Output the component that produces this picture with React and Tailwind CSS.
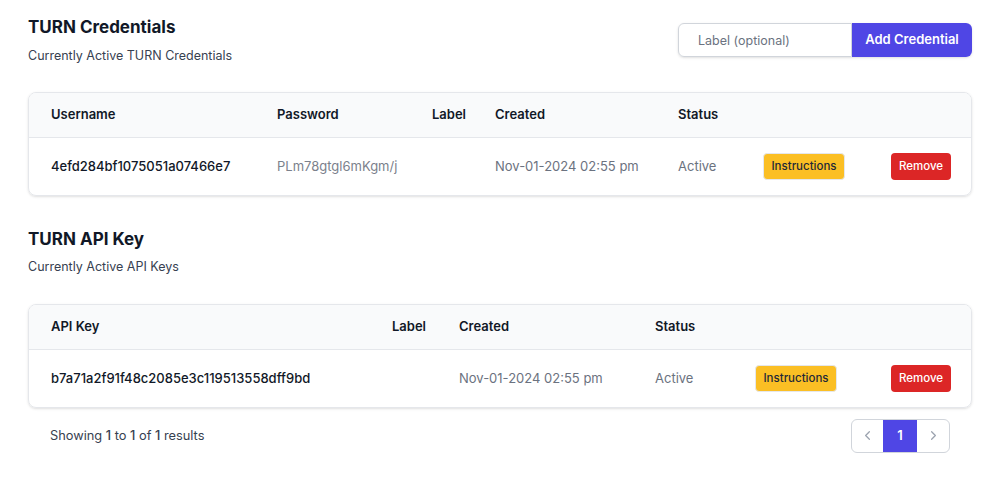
import { ChevronLeft, ChevronRight } from 'lucide-react'

const credCols = [
  { label: 'Username', w: 'w-[226px]' },
  { label: 'Password', w: 'w-[155px]' },
  { label: 'Label', w: 'w-[63px]' },
  { label: 'Created', w: 'w-[183px]' },
  { label: 'Status', w: 'w-[85px]' },
  { label: '', w: 'w-[128px]' },
  { label: '', w: '' },
]

const keyCols = [
  { label: 'API Key', w: 'w-[341px]' },
  { label: 'Label', w: 'w-[67px]' },
  { label: 'Created', w: 'w-[196px]' },
  { label: 'Status', w: 'w-[100px]' },
  { label: '', w: 'w-[136px]' },
  { label: '', w: '' },
]

function Actions() {
  return (
    <>
      <td className="pl-[22px]">
        <button className="h-[27px] w-[82px] rounded bg-[#fbbf24] border border-[#e5e7eb] text-[11.5px] font-medium text-[#1f2937]">
          Instructions
        </button>
      </td>
      <td className="pl-[22px]">
        <button className="h-[27px] w-[60px] rounded bg-[#dc2626] text-[11.5px] font-medium text-white">
          Remove
        </button>
      </td>
    </>
  )
}

function Table({ cols, children }) {
  return (
    <div className="border border-[#e5e7eb] rounded-lg shadow-sm overflow-hidden">
      <table className="w-full table-fixed border-collapse">
        <thead>
          <tr className="bg-[#f9fafb] border-b border-[#e5e7eb] h-[45px]">
            {cols.map((c, i) => (
              <th key={i} className={`${c.w} pl-[22px] text-left text-[13px] font-semibold text-[#111827]`}>
                {c.label}
              </th>
            ))}
          </tr>
        </thead>
        <tbody>
          <tr className="h-[57px] text-[13px]">{children}</tr>
        </tbody>
      </table>
    </div>
  )
}

export default function App() {
  return (
    <div className="bg-white min-h-[486px] px-[28px] pt-[17px]" style={{ fontFamily: 'Inter, "Noto Sans", sans-serif' }}>
      {/* Credentials */}
      <div className="flex justify-between items-start">
        <div>
          <h2 className="text-[17px] font-bold text-[#111827] leading-[20px]">TURN Credentials</h2>
          <p className="mt-[10px] text-[12.5px] text-[#374151]">Currently Active TURN Credentials</p>
        </div>
        <div className="flex mt-[6px] shadow-sm rounded-md">
          <input
            className="w-[174px] h-[34px] border border-[#d1d5db] rounded-l-md px-[19px] text-[12.5px] text-[#374151] placeholder:text-[#6b7280] outline-none"
            placeholder="Label (optional)"
          />
          <button className="w-[120px] h-[34px] bg-[#4f46e5] rounded-r-md text-white text-[13px] font-semibold">
            Add Credential
          </button>
        </div>
      </div>

      <div className="mt-[26px]">
        <Table cols={credCols}>
          <td className="pl-[22px] font-medium text-[#111827]">4efd284bf1075051a07466e7</td>
          <td className="pl-[22px] text-[#7b818c]">PLm78gtgl6mKgm/j</td>
          <td className="pl-[22px]"></td>
          <td className="pl-[22px] text-[#6b7280]">Nov-01-2024 02:55 pm</td>
          <td className="pl-[22px] text-[#6b7280]">Active</td>
          <Actions />
        </Table>
      </div>

      {/* API keys */}
      <h2 className="mt-[33px] text-[17px] font-bold text-[#111827] leading-[20px]">TURN API Key</h2>
      <p className="mt-[9px] text-[12.5px] text-[#374151]">Currently Active API Keys</p>

      <div className="mt-[27px]">
        <Table cols={keyCols}>
          <td className="pl-[22px] font-medium text-[#111827]">b7a71a2f91f48c2085e3c119513558dff9bd</td>
          <td className="pl-[22px]"></td>
          <td className="pl-[22px] text-[#6b7280]">Nov-01-2024 02:55 pm</td>
          <td className="pl-[22px] text-[#6b7280]">Active</td>
          <Actions />
        </Table>
      </div>

      {/* Pagination */}
      <div className="flex items-center justify-between pl-[22px] pr-[22px] mt-[11px]">
        <p className="text-[12.8px] text-[#374151]">
          Showing <span className="font-medium">1</span> to <span className="font-medium">1</span> of{' '}
          <span className="font-medium">1</span> results
        </p>
        <nav className="flex h-[34px] rounded-md border border-[#d1d5db] overflow-hidden">
          <button className="w-[31px] flex items-center justify-center text-[#9ca3af]">
            <ChevronLeft size={15} />
          </button>
          <button className="w-[34px] bg-[#4f46e5] text-white text-[13px] font-semibold">1</button>
          <button className="w-[32px] flex items-center justify-center text-[#9ca3af]">
            <ChevronRight size={15} />
          </button>
        </nav>
      </div>
    </div>
  )
}
